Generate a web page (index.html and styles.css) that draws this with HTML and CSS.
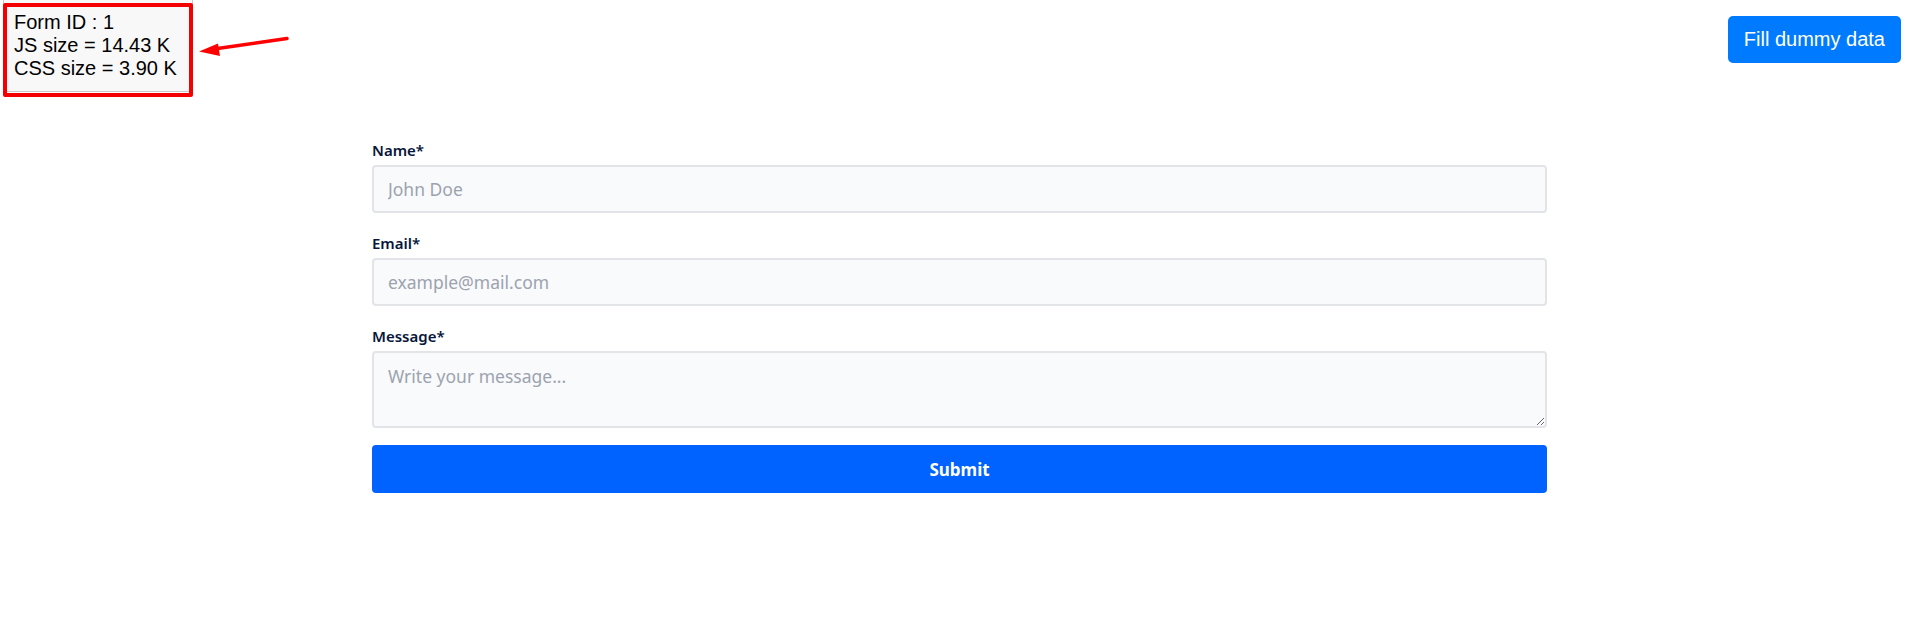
FILE: index.html
```html
<!DOCTYPE html>
<html lang="en">
<head>
<meta charset="utf-8">
<title>Contact form</title>
<link rel="stylesheet" href="styles.css">
</head>
<body>
<header class="topbar">
  <div class="info-wrap">
    <div class="info">
      <div>Form ID : 1</div>
      <div>JS size = 14.43 K</div>
      <div>CSS size = 3.90 K</div>
    </div>
    <div class="annot-rect"></div>
    <svg class="annot-arrow" width="100" height="40" viewBox="195 25 100 40" xmlns="http://www.w3.org/2000/svg">
      <line x1="287" y1="38.5" x2="214" y2="49" stroke="#f00" stroke-width="3.4" stroke-linecap="round"/>
      <polygon points="199,51.5 218,43.5 220,56" fill="#f00"/>
    </svg>
  </div>
  <button class="fill-btn" type="button">Fill dummy data</button>
</header>

<form class="form">
  <div class="field">
    <label class="label" for="name">Name*</label>
    <input class="input" id="name" type="text" placeholder="John Doe">
  </div>
  <div class="field">
    <label class="label" for="email">Email*</label>
    <input class="input" id="email" type="email" placeholder="example@mail.com">
  </div>
  <div class="field field-msg">
    <label class="label" for="msg">Message*</label>
    <textarea class="input textarea" id="msg" placeholder="Write your message..."></textarea>
  </div>
  <button class="submit" type="button">Submit</button>
</form>
</body>
</html>
```

FILE: styles.css
```css
* { box-sizing: border-box; }

html, body {
  margin: 0;
  padding: 0;
  background: #ffffff;
}

body {
  font-family: "Noto Sans", "Open Sans", sans-serif;
  width: 1914px;
  height: 642px;
  overflow: hidden;
}

.topbar {
  display: flex;
  justify-content: space-between;
  align-items: flex-start;
  height: 140px;
}

.info-wrap {
  position: relative;
  margin-left: 3px;
}

.info {
  width: 190px;
  height: 92px;
  padding: 11px 0 0 10px;
  background: #f8f8f8;
  border: 1px solid #c9c9c9;
  border-top: none;
  font-family: "Liberation Sans", Arial, sans-serif;
  font-size: 20px;
  line-height: 23px;
  color: #000;
}

.annot-rect {
  position: absolute;
  left: 0;
  top: 3px;
  width: 190px;
  height: 94px;
  border: 4.5px solid #f40000;
  border-radius: 2px;
}

.annot-arrow {
  position: absolute;
  left: 192px;
  top: 25px;
}

.fill-btn {
  margin: 16px 13px 0 0;
  height: 47px;
  padding: 0 16px;
  border: none;
  border-radius: 5px;
  background: #007bff;
  color: #ffffff;
  font-family: "Liberation Sans", Arial, sans-serif;
  font-size: 20px;
  line-height: 23px;
  cursor: pointer;
}

.form {
  width: 1175px;
  margin-left: 372px;
  display: flex;
  flex-direction: column;
}

.field {
  display: flex;
  flex-direction: column;
  margin-bottom: 20px;
}

.field-msg {
  margin-bottom: 17px;
}

.label {
  font-size: 15px;
  line-height: 20px;
  font-weight: 600;
  color: #08163a;
  margin-bottom: 5px;
}

.input {
  height: 48px;
  padding: 0 14px;
  border: 2px solid #e3e4e8;
  border-radius: 4px;
  background: #f9fafb;
  font-family: "Noto Sans", "Open Sans", sans-serif;
  font-size: 17.5px;
  color: #111827;
  outline: none;
}

.input::placeholder {
  color: #9ca3af;
}

.textarea {
  height: 77px;
  padding: 11px 14px;
  line-height: 24px;
  resize: vertical;
}

.submit {
  height: 48px;
  border: none;
  border-radius: 4px;
  background: #0062ff;
  color: #ffffff;
  font-family: "Noto Sans", "Open Sans", sans-serif;
  font-size: 17px;
  font-weight: 700;
  cursor: pointer;
}
```
